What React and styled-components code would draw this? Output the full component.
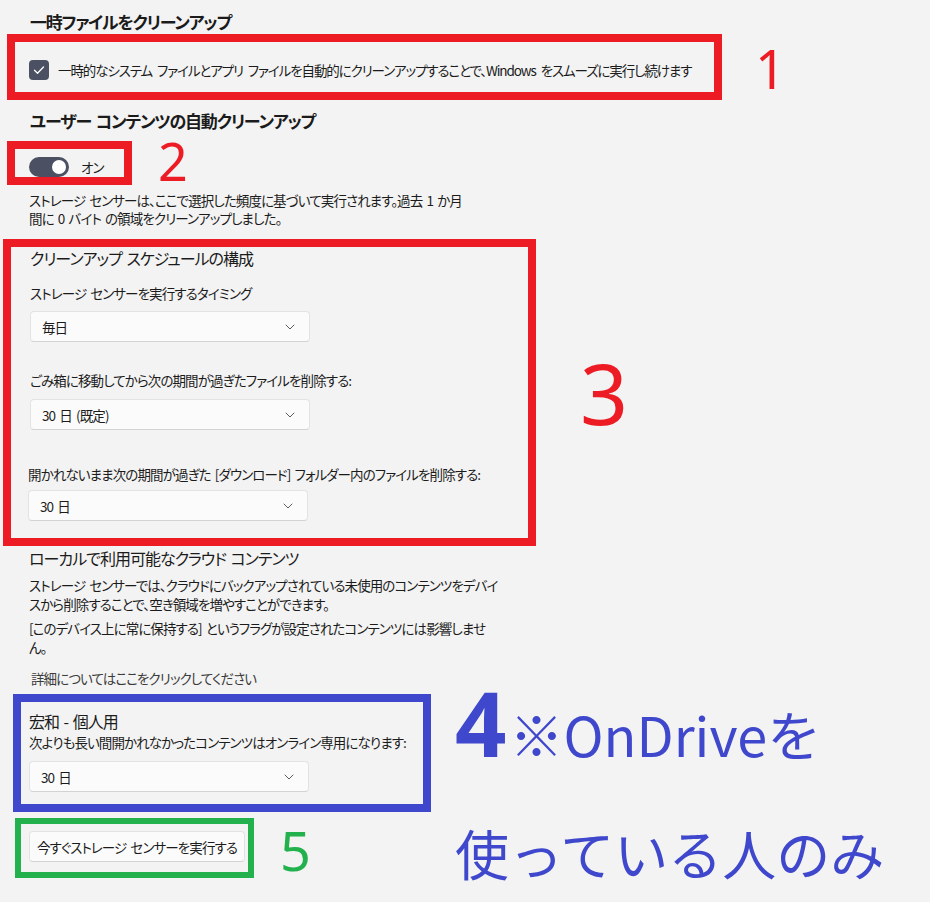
import styled, { createGlobalStyle } from 'styled-components';

const GlobalStyle = createGlobalStyle`
  html, body {
    margin: 0;
    padding: 0;
    background: #f3f3f3;
  }

  body {
    color: #1b1b1b;
    font-family: 'Noto Sans CJK JP', 'Noto Sans', sans-serif;
    font-feature-settings: 'palt';
    letter-spacing: -0.9px;
    word-spacing: 2px;
  }
`;

const Page = styled.div`
  width: 930px;
  height: 902px;
  overflow: hidden;
`;

const SectionTitle = styled.h2`
  font-size: 17px;
  font-weight: 700;
  letter-spacing: -1.2px;
  line-height: 24px;
  margin: ${({ $top }) => $top}px 0 0 30px;
  word-spacing: 2px;
`;

const SubTitle = styled.h3`
  font-size: 16px;
  font-weight: 400;
  letter-spacing: -1px;
  line-height: 22px;
  margin: 0;
`;

const Row = styled.div`
  align-items: center;
  display: flex;
  margin-top: ${({ $top }) => $top || 0}px;
  margin-left: ${({ $left }) => $left || 0}px;
`;

const Frame = styled.div`
  border: ${({ $thick }) => $thick || 8}px solid ${({ $color }) => $color};
  box-sizing: border-box;
  flex: none;
  padding: ${({ $pad }) => $pad};
  width: ${({ $width }) => $width}px;
`;

const Mark = styled.span`
  color: ${({ $color }) => $color};
  font-family: 'Noto Sans', 'Open Sans', sans-serif;
  font-size: ${({ $size }) => $size}px;
  font-weight: 400;
  letter-spacing: 0;
  line-height: 0.8;
  margin-left: ${({ $gap }) => $gap}px;
  margin-top: ${({ $lift }) => $lift || 0}px;
`;

const CheckRow = styled.label`
  align-items: center;
  display: flex;
  font-size: 13.5px;
  gap: 9px;
  letter-spacing: -1.1px;
  line-height: 20px;
  white-space: nowrap;
  word-spacing: 3px;
`;

const CheckBox = styled.span`
  align-items: center;
  background: #4b5163;
  border-radius: 4px;
  display: flex;
  flex: none;
  height: 20px;
  justify-content: center;
  width: 20px;
`;

const ToggleRow = styled.div`
  align-items: center;
  display: flex;
  font-size: 13.5px;
  gap: 12px;
  height: 20px;
  line-height: 20px;
`;

const Toggle = styled.span`
  align-items: center;
  background: #4b5163;
  border-radius: 10px;
  box-sizing: border-box;
  display: flex;
  height: 20px;
  justify-content: flex-end;
  padding-right: 3px;
  width: 40px;

  &::after {
    background: #fff;
    border-radius: 50%;
    content: '';
    height: 14px;
    width: 14px;
  }
`;

const Text = styled.p`
  color: ${({ $muted }) => ($muted ? '#3b3b3b' : '#1b1b1b')};
  font-size: 13.5px;
  line-height: ${({ $lh }) => $lh || 19}px;
  margin: ${({ $top }) => $top || 0}px 0 0 ${({ $left }) => $left || 0}px;
  white-space: nowrap;
`;

const Field = styled.div`
  margin-top: ${({ $top }) => $top}px;
  margin-left: ${({ $shift }) => $shift || 0}px;
`;

const Select = styled.div`
  align-items: center;
  background: #fbfbfb;
  border: 1px solid #e3e3e3;
  border-bottom-color: #d3d3d3;
  border-radius: 4px;
  box-sizing: border-box;
  display: flex;
  font-size: 13.5px;
  height: 31px;
  justify-content: space-between;
  margin-top: ${({ $top }) => $top}px;
  padding: 0 14px 0 11px;
  width: 280px;
`;

const Button = styled.button`
  background: #fbfbfb;
  border: 1px solid #e3e3e3;
  border-bottom-color: #d3d3d3;
  border-radius: 4px;
  color: #1b1b1b;
  display: block;
  font-family: inherit;
  font-feature-settings: 'palt';
  font-size: 13.5px;
  height: 31px;
  letter-spacing: -0.9px;
  padding: 0;
  white-space: nowrap;
  width: 216px;
  word-spacing: 2px;
`;

const Lower = styled.div`
  align-items: flex-start;
  display: flex;
  margin-top: 6px;
`;

const LeftColumn = styled.div`
  flex: none;
  width: 455px;
`;

const Note = styled.div`
  color: #3f48cc;
  font-family: 'Noto Sans CJK JP', sans-serif;
  font-feature-settings: normal;
  letter-spacing: 0;
  margin-top: -8px;
  word-spacing: 0;
`;

const NoteLine = styled.div`
  font-size: 54px;
  height: ${({ $h }) => $h}px;
  line-height: ${({ $h }) => $h}px;
  margin-top: ${({ $top }) => $top || 0}px;
  white-space: nowrap;

  b {
    font-family: 'Noto Sans', sans-serif;
    font-size: 90px;
    font-weight: 700;
    margin-right: 3px;
  }
`;

const Chevron = () => (
  <svg width="10" height="6" viewBox="0 0 10 6" fill="none">
    <path d="M1 1l4 4 4-4" stroke="#5c5c5c" strokeWidth="1" strokeLinecap="round" strokeLinejoin="round" />
  </svg>
);

const Check = () => (
  <svg width="12" height="10" viewBox="0 0 12 10" fill="none">
    <path d="M1.5 5.2l3 3 6-6.2" stroke="#fff" strokeWidth="1.3" strokeLinecap="round" strokeLinejoin="round" />
  </svg>
);

const App = () => {
  return (
    <Page>
      <GlobalStyle />
      <SectionTitle $top={10}>一時ファイルをクリーンアップ</SectionTitle>
      <Row $left={7}>
        <Frame $color="#ed1c24" $width={715} $pad="18px 0 12px 14px">
          <CheckRow>
            <CheckBox>
              <Check />
            </CheckBox>
            一時的なシステム ファイルとアプリ ファイルを自動的にクリーンアップすることで、Windows をスムーズに実行し続けます
          </CheckRow>
        </Frame>
        <Mark $color="#ed1c24" $size={54} $gap={33} $lift={4}>1</Mark>
      </Row>

      <SectionTitle $top={9}>ユーザー コンテンツの自動クリーンアップ</SectionTitle>
      <Row $left={7} $top={8}>
        <Frame $color="#ed1c24" $width={125} $pad="8px 0 0 14px">
          <ToggleRow>
            <Toggle />
            オン
          </ToggleRow>
        </Frame>
        <Mark $color="#ed1c24" $size={52} $gap={26} $lift={-4}>2</Mark>
      </Row>
      <Text $top={6} $left={29} $lh={18}>
        ストレージ センサーは、ここで選択した頻度に基づいて実行されます。過去 1 か月
        <br />
        間に 0 バイト の領域をクリーンアップしました。
      </Text>

      <Row $left={3} $top={12}>
        <Frame $color="#ed1c24" $width={533} $pad="0 0 17px 19px">
          <SubTitle>クリーンアップ スケジュールの構成</SubTitle>
          <Field $top={14}>
            <Text $lh={20}>ストレージ センサーを実行するタイミング</Text>
            <Select $top={8}>
              毎日
              <Chevron />
            </Select>
          </Field>
          <Field $top={28}>
            <Text $lh={20}>ごみ箱に移動してから次の期間が過ぎたファイルを削除する:</Text>
            <Select $top={9}>
              30 日 (既定)
              <Chevron />
            </Select>
          </Field>
          <Field $top={34} $shift={-2}>
            <Text $lh={20}>開かれないまま次の期間が過ぎた [ダウンロード] フォルダー内のファイルを削除する:</Text>
            <Select $top={6}>
              30 日
              <Chevron />
            </Select>
          </Field>
        </Frame>
        <Mark $color="#ed1c24" $size={84} $gap={44} $lift={0}>3</Mark>
      </Row>

      <Row $left={29} $top={1}>
        <SubTitle>ローカルで利用可能なクラウド コンテンツ</SubTitle>
      </Row>
      <Text $top={7} $left={29}>
        ストレージ センサーでは、クラウドにバックアップされている未使用のコンテンツをデバイ
        <br />
        スから削除することで、空き領域を増やすことができます。
      </Text>
      <Text $top={5} $left={29}>
        [このデバイス上に常に保持する] というフラグが設定されたコンテンツには影響しませ
        <br />
        ん。
      </Text>
      <Text $top={12} $left={31} $muted>
        詳細についてはここをクリックしてください
      </Text>

      <Lower>
        <LeftColumn>
          <Row $left={13}>
            <Frame $color="#3f48cc" $width={418} $pad="8px 0 12px 8px">
              <SubTitle>宏和 - 個人用</SubTitle>
              <Text $lh={20}>次よりも長い間開かれなかったコンテンツはオンライン専用になります:</Text>
              <Select $top={9}>
                30 日
                <Chevron />
              </Select>
            </Frame>
          </Row>
          <Row $left={15} $top={6}>
            <Frame $color="#22b14c" $thick={6} $width={239} $pad="7px 0 10px 8px">
              <Button>今すぐストレージ センサーを実行する</Button>
            </Frame>
            <Mark $color="#22b14c" $size={54} $gap={26} $lift={6}>5</Mark>
          </Row>
        </LeftColumn>
        <Note>
          <NoteLine $h={72}>
            <b>4</b>※OnDriveを
          </NoteLine>
          <NoteLine $h={90} $top={50}>使っている人のみ</NoteLine>
        </Note>
      </Lower>
    </Page>
  );
};

export default App;
